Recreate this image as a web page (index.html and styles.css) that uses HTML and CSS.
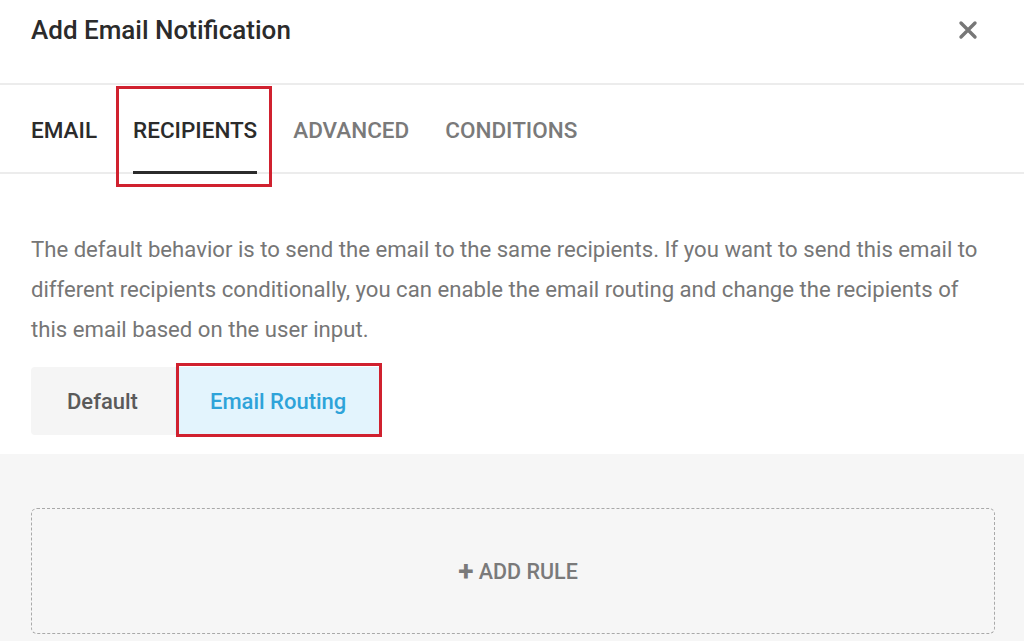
FILE: index.html
```html
<!DOCTYPE html>
<html lang="en">
<head>
  <meta charset="UTF-8">
  <title>Add Email Notification</title>
  <link rel="stylesheet" href="styles.css">
</head>
<body>
  <div class="modal">
    <header class="modal-header">
      <h1 class="modal-title">Add Email Notification</h1>
      <button class="close-btn" aria-label="Close">
        <svg width="20" height="20" viewBox="0 0 20 20">
          <path d="M3 3 L17 17 M17 3 L3 17" stroke="#777" stroke-width="3.4" stroke-linecap="round"/>
        </svg>
      </button>
    </header>

    <nav class="tabs">
      <a class="tab">EMAIL</a>
      <a class="tab active">RECIPIENTS<span class="mark tab-mark"></span></a>
      <a class="tab muted">ADVANCED</a>
      <a class="tab muted">CONDITIONS</a>
    </nav>

    <section class="recipients">
      <p class="help">The default behavior is to send the email to the same recipients. If you want to send this email to different recipients conditionally, you can enable the email routing and change the recipients of this email based on the user input.</p>
      <div class="switch">
        <button class="switch-btn">Default</button>
        <button class="switch-btn selected">Email Routing<span class="mark switch-mark"></span></button>
      </div>
    </section>

    <section class="rules">
      <button class="add-rule"><span class="plus">+</span> ADD RULE</button>
    </section>
  </div>
</body>
</html>
```

FILE: styles.css
```css
/* Global */
* {
    margin: 0;
    padding: 0;
    box-sizing: border-box;
}

body {
    font-family: Roboto, "Liberation Sans", sans-serif;
    background: #fff;
    color: #333;
}

button {
    font-family: inherit;
    border: none;
    background: none;
}

.modal {
    width: 1024px;
    height: 641px;
    overflow: hidden;
    display: flex;
    flex-direction: column;
}

/* Header */
.modal-header {
    height: 85px;
    display: flex;
    justify-content: space-between;
    align-items: center;
    padding: 0 46px 0 31px;
    border-bottom: 2px solid #ececec;
}

.modal-title {
    font-size: 26px;
    font-weight: 500;
    color: #2b2b2b;
    margin-top: -24px;
}

.close-btn {
    display: flex;
    margin-top: -24px;
}

/* Tabs */
.tabs {
    height: 89px;
    display: flex;
    gap: 36px;
    padding: 0 31px;
    border-bottom: 2px solid #ececec;
}

.tab {
    position: relative;
    display: flex;
    align-items: center;
    font-size: 22.5px;
    font-weight: 500;
    color: #2b2b2b;
    border-bottom: 3px solid transparent;
    padding-top: 3px;
    margin-bottom: -2px;
}

.tab.active {
    border-bottom-color: #2b2b2b;
}

.tab.muted {
    color: #7a7a7a;
}

/* annotation boxes */
.mark {
    position: absolute;
    border: 3px solid #d0212f;
    pointer-events: none;
}

.tab-mark {
    left: -17px;
    right: -15px;
    top: 1px;
    bottom: -16px;
}

/* Recipients */
.recipients {
    padding: 55px 31px 19px;
}

.help {
    font-size: 22.15px;
    line-height: 40px;
    color: #767676;
}

.switch {
    display: flex;
    margin-top: 18px;
}

.switch-btn {
    position: relative;
    height: 68px;
    padding: 0 37px 0 36px;
    font-size: 22px;
    font-weight: 500;
    color: #5a5a5a;
    background: #f5f5f5;
    border-radius: 4px 0 0 4px;
}

.switch-btn.selected {
    padding: 0 36px 0 35px;
    color: #2ea3d9;
    background: #e3f4fd;
    border-radius: 0;
}

.switch-mark {
    left: 1px;
    right: 0;
    top: -4px;
    bottom: -2px;
}

/* Rules */
.rules {
    flex: 1;
    background: #f6f6f6;
    padding: 54px 29px 0 31px;
}

.add-rule {
    width: 100%;
    height: 126px;
    padding-left: 10px;
    border: 1px dashed #a9a9a9;
    border-radius: 6px;
    font-size: 21.5px;
    font-weight: 500;
    color: #7a7a7a;
}

.plus {
    font-size: 28px;
    font-weight: 700;
    vertical-align: -2px;
}
```
